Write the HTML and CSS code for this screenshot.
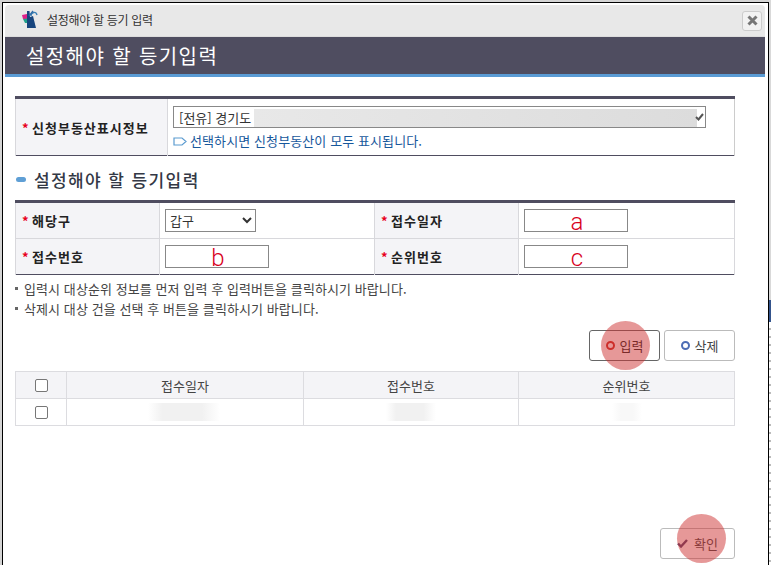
FILE: index.html
```html
<!DOCTYPE html>
<html lang="ko">
<head>
<meta charset="utf-8">
<title>설정해야 할 등기 입력</title>
<link rel="stylesheet" href="styles.css">
</head>
<body>
<div class="backdrop">
  <div class="strip s1"></div><div class="strip s2"></div><div class="strip s3"></div>
</div>
<div class="dialog">
  <div class="titlebar">
    <svg class="logo" width="16" height="19" viewBox="0 0 16 19"><path d="M5 1h2.500l.5 6 3-1 1.500 6 1.500 6H5z" fill="#17457e"/><path d="M0 5l5-1v5H1z" fill="#e0218a"/><path d="M1 9l4-.5V13H3z" fill="#1fa08a"/><path d="M9 6c0-4 5-5 6-1" fill="none" stroke="#3a7fb5" stroke-width="1.300"/><path d="M7 6l4-5" stroke="#2f6aa5" stroke-width="1.300"/></svg>
    <span class="titletext">설정해야 할 등기 입력</span>
    <button class="close" type="button" aria-label="닫기"><svg width="11" height="11" viewBox="0 0 11 11"><path d="M1.500 1.500l8 8M9.500 1.500l-8 8" stroke="#777" stroke-width="3"/></svg></button>
  </div>
  <div class="header">설정해야 할 등기입력</div>
  <div class="content">
    <table class="form top">
      <tr>
        <th class="w-top"><span class="req">*</span>신청부동산표시정보</th>
        <td>
          <div class="fakeselect"><span>[전유] 경기도</span><i class="mask"></i>
            <svg class="tick" width="9" height="8" viewBox="0 0 9 8"><path d="M1 4l2.500 2.500L8 1" fill="none" stroke="#555" stroke-width="2"/></svg>
          </div>
          <div class="hint"><svg width="14" height="9" viewBox="0 0 14 9"><path d="M1 1h8l4 3.500L9 8H1z" fill="none" stroke="#5b9bd0" stroke-width="1.200"/></svg>선택하시면 신청부동산이 모두 표시됩니다.</div>
        </td>
      </tr>
    </table>
    <h2 class="section"><i class="pill"></i>설정해야 할 등기입력</h2>
    <table class="form grid">
      <colgroup><col class="c1"><col class="c2"><col class="c1"><col></colgroup>
      <tr>
        <th><span class="req">*</span>해당구</th>
        <td><select class="sel"><option>갑구</option></select></td>
        <th><span class="req">*</span>접수일자</th>
        <td><div class="field">a</div></td>
      </tr>
      <tr>
        <th><span class="req">*</span>접수번호</th>
        <td><div class="field">b</div></td>
        <th><span class="req">*</span>순위번호</th>
        <td><div class="field">c</div></td>
      </tr>
    </table>
    <ul class="notes">
      <li>입력시 대상순위 정보를 먼저 입력 후 입력버튼을 클릭하시기 바랍니다.</li>
      <li>삭제시 대상 건을 선택 후 버튼을 클릭하시기 바랍니다.</li>
    </ul>
    <div class="actions">
      <button class="btn primary" type="button"><i class="dot red"></i>입력<i class="halo"></i></button>
      <button class="btn" type="button"><i class="dot blue"></i>삭제</button>
    </div>
    <table class="list">
      <tr class="head">
        <td class="chk"><i class="box"></i></td><td class="l1">접수일자</td><td class="l2">접수번호</td><td>순위번호</td>
      </tr>
      <tr class="row">
        <td class="chk"><i class="box"></i></td><td><i class="blur b1"></i></td><td><i class="blur b2"></i></td><td><i class="blur b3"></i></td>
      </tr>
    </table>
  </div>
  <div class="footer">
    <button class="btn ok" type="button"><svg width="11" height="9" viewBox="0 0 11 9"><path d="M1 4.500l3 3L10 1" fill="none" stroke="#55406b" stroke-width="2.400"/></svg>확인<i class="halo"></i></button>
  </div>
</div>
</body>
</html>
```
FILE: styles.css
```css
html, body { margin: 0; padding: 0; }
body {
  width: 771px; height: 565px; overflow: hidden; position: relative;
  background: #d4d4d4;
  font-family: "Noto Sans CJK KR", "Liberation Sans", sans-serif;
  color: #333;
}
i { display: block; font-style: normal; }
.backdrop { position: absolute; left: 769px; top: 0; width: 2px; height: 565px; background: #fff; }
.strip { position: absolute; left: 0; width: 2px; }
.s1 { top: 0; height: 300px; background: #d9d9d9; }
.s2 { top: 300px; height: 22px; background: #34548c; }
.s3 { top: 322px; height: 243px; background: repeating-linear-gradient(#fff 0 6px, #bbb 6px 8px); }
.dialog {
  position: absolute; left: 2px; top: 2px; width: 767px; height: 563px;
  background: #fff; border: 1px solid #000; border-bottom: 0; box-sizing: border-box;
  padding: 2px 3px 0 2px; display: flex; flex-direction: column;
}
.titlebar {
  height: 32px; box-sizing: border-box; flex: none; background: #e8e8e8; border-radius: 4px 4px 0 0;
  display: flex; align-items: center; padding: 0 3px 2px 17px; border-bottom: 1px solid #ddd;
}
.logo { flex: none; }
.titletext { margin-left: 9px; font-size: 12px; color: #333; flex: 1; letter-spacing: -.3px; }
.close {
  width: 20px; height: 20px; padding: 0; background: #f2f2f2; border: 1px solid #ccc;
  border-radius: 3px; display: flex; align-items: center; justify-content: center; margin-top: 2px;
}
.header {
  height: 37px; flex: none; background: #4f4d60; border-bottom: 3px solid #5a9bd4;
  color: #fff; font-size: 20px; letter-spacing: 1.400px; line-height: 37px; padding-left: 21px;
}
.content { padding: 19px 30px 0 10px; flex: none; }
table { border-collapse: collapse; width: 100%; table-layout: fixed; }
.form { border-top: 3px solid #4f4d60; border-bottom: 1px solid #4f4d60; }
.form th, .form td { border: 1px solid #d8d8dc; }
.form tr:first-child th, .form tr:first-child td { border-top: 0; }
.form tr:last-child th, .form tr:last-child td { border-bottom: 0; }
.form th {
  background: #f4f4f7; font-size: 13px; font-weight: 700; color: #222;
  text-align: left; padding: 0 0 0 6px; letter-spacing: 1px;
}
.req { display: inline-block; width: 10px; color: #e8001c; font-weight: 700; letter-spacing: 0; }
.w-top { width: 145px; height: 56px; }
.top td { padding: 7px 5px 0; vertical-align: top; border-right: 1px solid #ccc; }
.fakeselect {
  height: 22px; width: 533px; box-sizing: border-box; border: 1px solid #888;
  display: flex; align-items: center; padding-left: 5px; font-size: 13px; position: relative; background: #fff;
}
.fakeselect span { flex: none; }
.mask { position: absolute; left: 80px; right: 8px; top: 2px; bottom: 0; background: linear-gradient(90deg, #e8e8e8, #dcdcdc); }
.tick { position: absolute; right: 1px; top: 6px; }
.hint {
  display: flex; align-items: center; gap: 3px; margin-top: 4px; font-size: 13px; color: #17589c; line-height: 18px;
  letter-spacing: .1px;
}
.section {
  margin: 0; height: 44px; display: flex; align-items: center; font-size: 17px; font-weight: 500; color: #333845;
  letter-spacing: 1.400px; box-sizing: border-box; padding-top: 3px;
}
.pill { width: 10px; height: 5px; border-radius: 3px; background: #5f9fd5; margin: 0 8px 0 1px; flex: none; }
.c1 { width: 144px; }
.c2 { width: 215px; }
.grid td { padding: 0 5px; }
.grid th { height: 35px; }
.sel {
  width: 91px; height: 23px; font: 13px "Noto Sans CJK KR", sans-serif; color: #333; background: #fff;
  border: 1px solid #888; border-radius: 0; display: block; padding: 0;
}
.field {
  width: 104px; height: 23px; box-sizing: border-box; border: 1px solid #888; background: #fff; padding-left: 2px;
  color: #d8001c; font: 300 24px/25px Roboto, "Liberation Sans", sans-serif; text-align: center;
}
.notes { list-style: none; margin: 0; padding: 4px 0 0 0; font-size: 13px; color: #444; letter-spacing: .08px; }
.notes li { height: 20px; line-height: 20px; padding-left: 9px; position: relative; }
.notes li::before { content: ""; position: absolute; left: 0; top: 8px; width: 3px; height: 3px; background: #666; }
.actions { display: flex; justify-content: flex-end; gap: 4px; margin-top: 11px; }
.btn {
  width: 71px; height: 31px; box-sizing: border-box; background: #fff; border: 1px solid #bbb; border-radius: 3px;
  display: flex; align-items: center; justify-content: center; gap: 5px; padding: 0;
  font: 13px "Noto Sans CJK KR", sans-serif; color: #444; position: relative;
}
.primary { border-color: #666; color: #222; }
.dot { width: 9px; height: 9px; box-sizing: border-box; border-radius: 50%; border: 2.500px solid; }
.red { border-color: #cc2a22; }
.blue { border-color: #4d6db5; }
.halo {
  position: absolute; width: 49px; height: 49px; border-radius: 50%; background: rgba(205, 50, 50, .5);
  left: 11px; top: -10px;
}
.list { margin-top: 10px; }
.list td { border: 1px solid #dcdce0; text-align: center; font-size: 13px; color: #444; padding: 0; }
.head { height: 27px; background: #f4f4f7; }
.row { height: 27px; }
.chk { width: 50px; }
.l1 { width: 236px; }
.l2 { width: 214px; }
.box { width: 11px; height: 11px; border: 1px solid #777; border-radius: 2px; margin: 0 auto; background: #fff; }
.blur { height: 18px; margin: 0 auto; background: linear-gradient(90deg, transparent, #f1f1f1 20%, #f1f1f1 75%, transparent); }
.b1 { width: 72px; transform: translateX(-1px); }
.b2 { width: 50px; }
.b3 { width: 30px; background: linear-gradient(90deg, transparent, #f8f8f8 30%, #f8f8f8 70%, transparent); }
.footer { flex: 1; position: relative; display: flex; justify-content: flex-end; align-items: flex-end; padding: 0 30px 6px 0; }
.ok { width: 75px; gap: 6px; }
.ok .halo { left: 16px; top: -15px; }
```
